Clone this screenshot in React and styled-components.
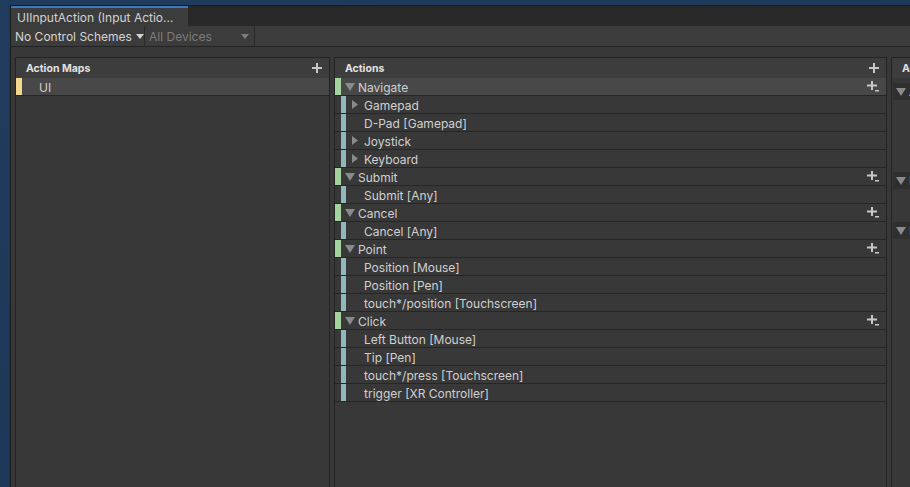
import React from 'react';
import styled, { createGlobalStyle } from 'styled-components';

const Global = createGlobalStyle`
  html, body { margin: 0; padding: 0; height: 100%; overflow: hidden; background: #1d3958; }
  #root { height: 100%; }
  * { box-sizing: border-box; }
`;

const Page = styled.div`
  height: 100vh;
  padding: 5px 0 0 10px;
  display: flex;
  font-family: Inter, "Noto Sans", sans-serif;
  background: linear-gradient(160deg, #1f3c5c 0%, #1b3655 100%);
`;

const Window = styled.div`
  flex: 1;
  min-width: 0;
  display: flex;
  flex-direction: column;
  background: #383838;
  border-left: 1px solid #1a1a1a;
  border-top: 1px solid #1a1a1a;
`;

const TabBar = styled.div`
  height: 20px;
  display: flex;
  background: #282828;
`;

const Tab = styled.div`
  width: 177px;
  background: #3c3c3c;
  border-top: 2px solid #3a78bf;
  color: #d2d2d2;
  font-size: 12px;
  padding-left: 6px;
  display: flex;
  align-items: center;
  white-space: nowrap;
`;

const Toolbar = styled.div`
  height: 21px;
  display: flex;
  background: #3c3c3c;
  border-bottom: 1px solid #232323;
`;

const Dropdown = styled.div`
  width: ${p => p.$w}px;
  display: flex;
  align-items: center;
  justify-content: ${p => (p.$spread ? 'space-between' : 'flex-start')};
  gap: 4px;
  padding: 1px 5px 0 4px;
  font-size: 12px;
  color: ${p => (p.$disabled ? '#7c7c7c' : '#d4d4d4')};
  border-right: 1px solid #2a2a2a;
  white-space: nowrap;
  svg { flex-shrink: 0; }
`;

const Body = styled.div`
  flex: 1;
  min-height: 0;
  display: flex;
  gap: 4px;
  padding: 10px 0 0 4px;
`;

const Panel = styled.div`
  width: ${p => p.$w}px;
  flex-shrink: 0;
  display: flex;
  flex-direction: column;
  background: #383838;
  border: 1px solid #232323;
  border-bottom: none;
  overflow: hidden;
`;

const Header = styled.div`
  height: 20px;
  flex-shrink: 0;
  display: flex;
  align-items: center;
  justify-content: space-between;
  padding: 0 ${p => p.$pr || 7}px 0 10px;
  background: #3d3d3d;
  color: #e2e2e2;
  font-size: 10.5px;
  font-weight: 700;
  white-space: nowrap;
`;

const Row = styled.div`
  height: 18px;
  display: flex;
  align-items: stretch;
  background: ${p => (p.$selected ? '#484848' : '#383838')};
  border-bottom: 1px solid #262626;
  padding-left: ${p => p.$indent || 0}px;
  padding-right: 7px;
`;

const Bar = styled.div`
  width: ${p => p.$w}px;
  flex-shrink: 0;
  background: ${p => p.$color};
`;

const Label = styled.div`
  display: flex;
  align-items: center;
  color: #d0d0d0;
  font-size: 12px;
  white-space: nowrap;
  padding-top: 1px;
  padding-left: ${p => p.$pl || 0}px;
  flex: 1;
`;

const Arrow = styled.span`
  width: ${p => p.$w}px;
  display: inline-flex;
  align-items: center;
  justify-content: center;
  margin: 0 ${p => p.$mr}px 0 ${p => p.$ml}px;
`;

const IconBox = styled.div`
  display: flex;
  align-items: center;
`;

const Foldout = styled.div`
  height: 17px;
  margin: ${p => p.$mt}px 0 0 1px;
  display: flex;
  align-items: center;
  gap: 3px;
  padding-left: 3px;
  background: #2f2f2f;
  color: #d0d0d0;
  font-size: 12px;
  white-space: nowrap;
`;

const Down = () => (
  <svg width="10" height="8" viewBox="0 0 10 8"><path d="M0 0 H10 L5 8 Z" fill="#8a8a8a" /></svg>
);
const Right = () => (
  <svg width="6" height="9" viewBox="0 0 6 9"><path d="M0 0 L6 4.5 L0 9 Z" fill="#8a8a8a" /></svg>
);
const Plus = () => (
  <svg width="10" height="10" viewBox="0 0 10 10">
    <rect x="4" y="0" width="2" height="10" fill="#c8c8c8" />
    <rect x="0" y="4" width="10" height="2" fill="#c8c8c8" />
  </svg>
);
const PlusMenu = () => (
  <svg width="12" height="11" viewBox="0 0 12 11">
    <rect x="4" y="0" width="2" height="9" fill="#c8c8c8" />
    <rect x="0" y="3.5" width="10" height="2" fill="#c8c8c8" />
    <rect x="8" y="9" width="4" height="1.5" fill="#c8c8c8" />
  </svg>
);
const Caret = ({ color }) => (
  <svg width="8" height="5" viewBox="0 0 8 5"><path d="M0 0 H8 L4 5 Z" fill={color} /></svg>
);

const actions = [
  { name: 'Navigate', selected: true, bindings: [
    { name: 'Gamepad', composite: true },
    { name: 'D-Pad [Gamepad]' },
    { name: 'Joystick', composite: true },
    { name: 'Keyboard', composite: true },
  ] },
  { name: 'Submit', bindings: [{ name: 'Submit [Any]' }] },
  { name: 'Cancel', bindings: [{ name: 'Cancel [Any]' }] },
  { name: 'Point', bindings: [
    { name: 'Position [Mouse]' },
    { name: 'Position [Pen]' },
    { name: 'touch*/position [Touchscreen]' },
  ] },
  { name: 'Click', bindings: [
    { name: 'Left Button [Mouse]' },
    { name: 'Tip [Pen]' },
    { name: 'touch*/press [Touchscreen]' },
    { name: 'trigger [XR Controller]' },
  ] },
];

export default function App() {
  return (
    <>
      <Global />
      <Page>
        <Window>
          <TabBar>
            <Tab>UIInputAction (Input Actio...</Tab>
          </TabBar>
          <Toolbar>
            <Dropdown $w={134}>No Control Schemes<Caret color="#d4d4d4" /></Dropdown>
            <Dropdown $w={110} $disabled $spread>All Devices <Caret color="#7c7c7c" /></Dropdown>
          </Toolbar>
          <Body>
            <Panel $w={315}>
              <Header><span>Action Maps</span><IconBox><Plus /></IconBox></Header>
              <Row $selected>
                <Bar $w={6} $color="#f4d88c" />
                <Label $pl={17}>UI</Label>
              </Row>
            </Panel>
            <Panel $w={553}>
              <Header $pr={7}><span>Actions</span><IconBox><Plus /></IconBox></Header>
              {actions.map(a => (
                <React.Fragment key={a.name}>
                  <Row $selected={a.selected}>
                    <Bar $w={6} $color="#a3d49d" />
                    <Arrow $w={10} $ml={4} $mr={3}><Down /></Arrow>
                    <Label>{a.name}</Label>
                    <IconBox><PlusMenu /></IconBox>
                  </Row>
                  {a.bindings.map(b => (
                    <Row key={b.name} $indent={6}>
                      <Bar $w={5} $color="#8fb9bd" />
                      {b.composite ? (
                        <Arrow $w={6} $ml={6} $mr={6}><Right /></Arrow>
                      ) : null}
                      <Label $pl={b.composite ? 0 : 18}>{b.name}</Label>
                    </Row>
                  ))}
                </React.Fragment>
              ))}
            </Panel>
            <Panel $w={300}>
              <Header><span>Action Properties</span></Header>
              <Foldout $mt={5}><Down /> Action</Foldout>
              <Foldout $mt={72}><Down /> Interactions</Foldout>
              <Foldout $mt={33}><Down /> Processors</Foldout>
            </Panel>
          </Body>
        </Window>
      </Page>
    </>
  );
}
